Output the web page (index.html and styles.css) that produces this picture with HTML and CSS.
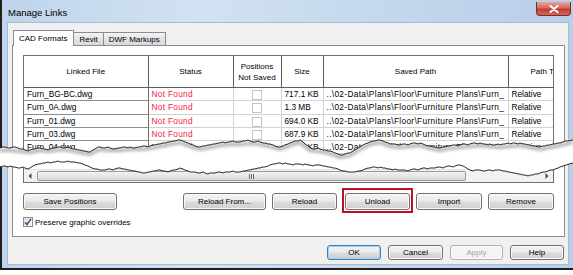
FILE: index.html
```html
<!DOCTYPE html>
<html lang="en">
<head>
    <meta charset="UTF-8">
    <title>Manage Links</title>
    <link rel="stylesheet" href="styles.css">
</head>
<body>
<div class="shot">
    <div class="window">
        <div class="titlebar">
            <span class="title">Manage Links</span>
            <span class="close">
                <svg width="10" height="8" viewBox="0 0 10 8"><path d="M1.5 1 L8.5 7 M8.5 1 L1.5 7" stroke="#fff" stroke-width="2" stroke-linecap="round"/></svg>
            </span>
        </div>
        <div class="client">
            <div class="tabs">
                <span class="tab active">CAD Formats</span>
                <span class="tab">Revit</span>
                <span class="tab">DWF Markups</span>
            </div>
            <div class="panel">
                <div class="grid">
                    <div class="grid-body">
                        <table>
                            <colgroup>
                                <col style="width:124px">
                                <col style="width:85px">
                                <col style="width:48px">
                                <col style="width:42px">
                                <col style="width:185px">
                                <col style="width:46px">
                            </colgroup>
                            <thead>
                                <tr>
                                    <th>Linked File</th>
                                    <th>Status</th>
                                    <th class="two-line">Positions<br>Not Saved</th>
                                    <th>Size</th>
                                    <th>Saved Path</th>
                                    <th class="cut">Path T</th>
                                </tr>
                            </thead>
                            <tbody>
                                <tr>
                                    <td class="name">Furn_BG-BC.dwg</td>
                                    <td class="bad">Not Found</td>
                                    <td class="box"><span class="cb"></span></td>
                                    <td>717.1 KB</td>
                                    <td class="path">..\02-Data\Plans\Floor\Furniture Plans\Furn_</td>
                                    <td>Relative</td>
                                </tr>
                                <tr>
                                    <td class="name">Furn_0A.dwg</td>
                                    <td class="bad">Not Found</td>
                                    <td class="box"><span class="cb"></span></td>
                                    <td>1.3 MB</td>
                                    <td class="path">..\02-Data\Plans\Floor\Furniture Plans\Furn_</td>
                                    <td>Relative</td>
                                </tr>
                                <tr>
                                    <td class="name">Furn_01.dwg</td>
                                    <td class="bad">Not Found</td>
                                    <td class="box"><span class="cb"></span></td>
                                    <td>694.0 KB</td>
                                    <td class="path">..\02-Data\Plans\Floor\Furniture Plans\Furn_</td>
                                    <td>Relative</td>
                                </tr>
                                <tr>
                                    <td class="name">Furn_03.dwg</td>
                                    <td class="bad">Not Found</td>
                                    <td class="box"><span class="cb"></span></td>
                                    <td>687.9 KB</td>
                                    <td class="path">..\02-Data\Plans\Floor\Furniture Plans\Furn_</td>
                                    <td>Relative</td>
                                </tr>
                                <tr>
                                    <td class="name">Furn_04.dwg</td>
                                    <td class="bad">Not Found</td>
                                    <td class="box"><span class="cb"></span></td>
                                    <td>681.5 KB</td>
                                    <td class="path">..\02-Data\Plans\Floor\Furniture Plans\Furn_</td>
                                    <td>Relative</td>
                                </tr>
                            </tbody>
                        </table>
                    </div>
                    <div class="hscroll">
                        <span class="arrow">
                            <svg width="4" height="6" viewBox="0 0 4 6"><path d="M3.5 0 L0.5 3 L3.5 6 Z" fill="#4d4d4d"/></svg>
                        </span>
                        <span class="thumb"><span class="grip"></span></span>
                        <span class="track"></span>
                        <span class="arrow">
                            <svg width="4" height="6" viewBox="0 0 4 6"><path d="M0.5 0 L3.5 3 L0.5 6 Z" fill="#4d4d4d"/></svg>
                        </span>
                    </div>
                </div>
                <div class="actions">
                    <span class="btn save">Save Positions</span>
                    <span class="btn-group">
                        <span class="btn w83">Reload From...</span>
                        <span class="btn w65">Reload</span>
                        <span class="btn w65 marked">Unload</span>
                        <span class="btn w66">Import</span>
                        <span class="btn w66">Remove</span>
                    </span>
                </div>
                <div class="option">
                    <span class="checkbox">
                        <svg width="8" height="8" viewBox="0 0 8 8"><path d="M1 4.2 L3 6.5 L7 0.8" fill="none" stroke="#3b4f74" stroke-width="1.4"/></svg>
                    </span>
                    <span>Preserve graphic overrides</span>
                </div>
            </div>
            <div class="footer">
                <span class="btn default w54">OK</span>
                <span class="btn w55">Cancel</span>
                <span class="btn disabled w53">Apply</span>
                <span class="btn w54">Help</span>
            </div>
        </div>
    </div>

    <!-- torn paper cut across the table -->
    <svg class="tear" width="573" height="50" viewBox="0 135 573 50">
        <defs>
            <filter id="soft" x="-5%" y="-50%" width="110%" height="200%">
                <feGaussianBlur stdDeviation="1.4"/>
            </filter>
        </defs>
        <polygon fill="#fff" points="0,148 5,147 10,148 15,147 20,149 25,150 30,150 35,149 40,148 45,149 50,149 55,148 60,147 65,148 70,148 75,149 80,150 85,151 90,152 95,149 100,147 105,148 110,148 115,149 120,148 125,147 130,147 135,148 140,147 145,146 150,146 155,145 160,144 165,143 170,142 175,141 180,140 185,142 190,144 195,146 200,147 205,146 210,145 215,144 220,143 225,143 230,142 235,142 240,142 245,141 250,141 255,142 260,142 265,143 270,144 275,146 280,147 285,145 290,143 295,141 300,140 305,144 310,148 315,149 320,149 325,150 330,151 335,153 340,155 345,154 350,153 355,150 360,147 365,144 370,142 375,141 380,140 385,142 390,144 395,144 400,145 405,144 410,144 415,143 420,143 425,145 430,146 435,147 440,148 445,147 450,146 455,145 460,145 465,144 470,144 475,143 480,143 485,144 490,144 495,145 500,145 505,144 510,144 515,143 520,143 525,144 530,145 535,146 540,147 545,146 550,145 555,144 560,143 565,141 573,140 573,163 566,165 560,167 555,169 550,170 545,172 540,173 535,174 530,175 525,175 520,174 515,173 510,172 505,171 500,170 495,170 490,170 485,171 480,170 475,170 470,170 465,167 460,165 455,166 450,166 445,167 440,167 435,168 430,168 425,168 420,169 415,169 410,170 405,170 400,170 395,169 390,169 385,168 380,167 375,167 370,168 365,169 362,170 358,171 355,172 350,172 345,171 340,170 335,168 330,167 325,166 320,165 315,165 310,165 305,164 300,164 295,164 290,164 285,163 280,163 275,164 270,165 265,167 260,168 255,169 250,170 245,171 240,172 235,172 230,172 225,172 220,172 215,173 210,173 205,173 200,173 195,172 190,172 185,170 180,168 175,170 170,171 165,171 160,170 155,171 150,172 145,173 140,172 135,171 130,170 125,169 120,168 115,169 110,169 105,170 100,170 96,169 92,168 88,166 85,165 80,163 75,162 70,162 65,162 60,162 55,162 50,163 45,163 40,164 35,165 30,168 25,168 20,168 15,167 10,166 5,166 0,167"/>
        <polyline class="shade" filter="url(#soft)" transform="translate(0,2.5)" points="0,148 10,148 20,149 30,150 40,148 50,149 60,147 70,148 80,150 90,152 95,149 100,147 110,148 120,148 130,147 140,147 150,146 160,144 170,142 180,140 190,144 200,147 210,145 220,143 230,142 240,142 250,141 260,142 270,144 280,147 290,143 300,140 305,144 310,148 320,149 330,151 340,155 350,153 360,147 370,142 380,140 390,144 400,145 410,144 420,143 430,146 440,148 450,146 460,145 470,144 480,143 490,144 500,145 510,144 520,143 530,145 540,147 550,145 560,143 573,140"/>
        <polyline class="edge" points="0,148 3,147 5,147 8,148 10,148 13,147 15,147 18,148 20,149 23,149 25,150 28,151 30,150 33,149 35,149 38,148 40,148 43,149 45,149 48,150 50,149 53,148 55,148 58,147 60,147 63,148 65,148 68,147 70,148 73,149 75,149 78,150 80,150 83,151 85,151 88,152 90,152 93,150 95,149 98,147 100,147 103,148 105,148 108,147 110,148 113,149 115,149 118,148 120,148 123,147 125,147 128,148 130,147 133,148 135,148 138,147 140,147 143,146 145,146 148,147 150,146 153,145 155,145 158,144 160,144 163,143 165,143 168,142 170,142 173,141 175,141 178,140 180,140 183,141 185,142 188,143 190,144 193,145 195,146 198,147 200,147 203,146 205,146 208,145 210,145 213,144 215,144 218,143 220,143 223,142 225,143 228,142 230,142 233,141 235,142 238,142 240,142 243,141 245,141 248,140 250,141 253,142 255,142 258,141 260,142 263,143 265,143 268,144 270,144 273,145 275,146 278,147 280,147 283,146 285,145 288,144 290,143 293,142 295,141 298,141 300,140 303,142 305,144 308,146 310,148 313,149 315,149 318,148 320,149 323,150 325,150 328,151 330,151 333,152 335,153 338,154 340,155 343,155 345,154 348,153 350,153 353,151 355,150 358,148 360,147 363,145 365,144 368,143 370,142 373,141 375,141 378,140 380,140 383,141 385,142 388,143 390,144 393,144 395,144 398,145 400,145 403,144 405,144 408,145 410,144 413,143 415,143 418,144 420,143 423,144 425,145 428,146 430,146 433,147 435,147 438,148 440,148 443,147 445,147 448,146 450,146 453,145 455,145 458,146 460,145 463,144 465,144 468,145 470,144 473,143 475,143 478,144 480,143 483,144 485,144 488,145 490,144 493,145 495,145 498,144 500,145 503,144 505,144 508,143 510,144 513,143 515,143 518,144 520,143 523,144 525,144 528,145 530,145 533,146 535,146 538,147 540,147 543,146 545,146 548,145 550,145 553,144 555,144 558,143 560,143 563,142 565,141 568,141 573,140"/>
        <polyline class="edge" points="0,167 3,166 5,166 8,167 10,166 13,167 15,167 18,168 20,168 23,167 25,168 28,169 30,168 33,166 35,165 38,164 40,164 43,163 45,163 48,162 50,163 53,162 55,162 58,161 60,162 63,162 65,162 68,161 70,162 73,162 75,162 78,163 80,163 83,164 85,165 88,166 90,167 92,168 95,169 97,169 100,170 103,170 105,170 108,169 110,169 113,170 115,169 118,168 120,168 123,169 125,169 128,170 130,170 133,171 135,171 138,172 140,172 143,173 145,173 148,172 150,172 153,171 155,171 158,170 160,170 163,171 165,171 168,172 170,171 173,170 175,170 178,169 180,168 183,169 185,170 188,171 190,172 193,172 195,172 198,173 200,173 203,172 205,173 208,174 210,173 213,173 215,173 218,172 220,172 223,173 225,172 228,172 230,172 233,171 235,172 238,172 240,172 243,171 245,171 248,170 250,170 253,169 255,169 258,168 260,168 263,167 265,167 268,166 270,165 273,164 275,164 278,163 280,163 283,164 285,163 288,164 290,164 293,165 295,164 298,164 300,164 303,165 305,164 308,165 310,165 313,166 315,165 318,165 320,165 323,166 325,166 328,167 330,167 333,168 335,168 338,169 340,170 343,171 345,171 348,172 350,172 353,172 355,172 358,171 360,171 363,170 365,169 368,168 370,168 373,167 375,167 378,168 380,167 383,168 385,168 388,169 390,169 393,170 395,169 398,170 400,170 403,170 405,170 408,171 410,170 413,169 415,169 418,170 420,169 423,168 425,168 428,169 430,168 433,168 435,168 438,167 440,167 443,168 445,167 448,166 450,166 453,167 455,166 458,165 460,165 463,166 465,167 468,169 470,170 473,171 475,170 478,170 480,170 483,171 485,171 488,170 490,170 493,171 495,170 498,170 500,170 503,171 505,171 508,172 510,172 513,173 515,173 518,174 520,174 523,175 525,175 528,176 530,175 533,175 535,174 538,174 540,173 543,172 545,172 548,171 550,170 553,170 555,169 558,168 560,167 563,166 566,165 569,164 573,163"/>
    </svg>
</div>
</body>
</html>
```

FILE: styles.css
```css
body {
    margin: 0;
    background: #fff;
    font-family: "Liberation Sans", Arial, sans-serif;
    font-size: 8px;
    color: #000;
}
.shot {
    position: relative;
    width: 573px;
    height: 275px;
    overflow: hidden;
}
.window {
    width: 573px;
    height: 270px;
    box-sizing: border-box;
    border-left: 2px solid #1f1f1f;
    border-bottom: 2px solid #1f1f1f;
    padding: 0 5px 4px 6px;
    display: flex;
    flex-direction: column;
    background: linear-gradient(to right, #bed4ec, #d3e2f2 35%, #c6d9ee 60%, #b8cfe9);
}
.titlebar {
    height: 23px;
    display: flex;
    justify-content: space-between;
    align-items: flex-start;
}
.title {
    font-size: 9.5px;
    margin-top: 7px;
    color: #000;
}
.close {
    width: 35px;
    height: 14px;
    margin-top: 2px;
    margin-right: -3px;
    box-sizing: border-box;
    border: 1px solid #7a2c2c;
    border-top: none;
    border-radius: 0 0 4px 4px;
    background: linear-gradient(#e9a493, #d4695e 45%, #c23b33 55%, #d2685b);
    display: flex;
    align-items: center;
    justify-content: center;
}
.client {
    flex: 1;
    background: #f0f0f0;
    padding: 7px 3px 4px 4px;
    display: flex;
    flex-direction: column;
    box-shadow: 0 0 0 1px #a7bad0;
}
/* tabs */
.tabs {
    height: 15px;
    display: flex;
    align-items: flex-end;
    padding-left: 1px;
}
.tab {
    height: 13px;
    box-sizing: border-box;
    border: 1px solid #898c95;
    border-bottom: none;
    margin-left: -1px;
    padding: 0 5px;
    display: flex;
    align-items: center;
    background: linear-gradient(#f3f3f3, #e3e3e3 50%, #dadada);
}
.tab.active {
    height: 16px;
    margin-bottom: -1px;
    margin-left: 0;
    background: #fff;
    position: relative;
    z-index: 1;
    padding: 0 6px 1px 5px;
}
.panel {
    height: 192px;
    box-sizing: border-box;
    border: 1px solid #898c95;
    background: #fff;
    padding: 9px 10px 0 10px;
}
/* links grid */
.grid {
    height: 128px;
    box-sizing: border-box;
    border: 1px solid #6f6f6f;
    display: flex;
    flex-direction: column;
}
.grid-body {
    flex: 1;
    overflow: hidden;
}
table {
    border-collapse: collapse;
    table-layout: fixed;
    width: 530px;
}
th {
    height: 31px;
    font-weight: normal;
    text-align: center;
    border-right: 1px solid #5c5c5c;
    border-bottom: 1px solid #5c5c5c;
    padding: 0;
    white-space: nowrap;
    overflow: hidden;
}
th.two-line {
    line-height: 11px;
}
th.cut {
    text-align: left;
    padding-left: 22px;
    border-right: none;
}
td {
    height: 12.3px;
    padding: 0 0 0 3px;
    border-right: 1px solid #d2d2d2;
    border-bottom: 1px solid #d2d2d2;
    white-space: nowrap;
    overflow: hidden;
    line-height: 12px;
    font-size: 8.3px;
}
td:last-child {
    border-right: none;
}
td.name {
    border-right-color: #6c6c6c;
    border-bottom-color: #8c8c8c;
}
td.bad {
    color: #f6203f;
    letter-spacing: 0.3px;
}
td.path {
    letter-spacing: 0.33px;
}
td.box {
    padding: 0;
    text-align: center;
}
.cb {
    display: inline-block;
    width: 8px;
    height: 8px;
    border: 1px solid #c4c4c4;
    vertical-align: middle;
}
.hscroll {
    height: 12px;
    display: flex;
    background: #f2f2f2;
    border-top: 1px solid #e2e2e2;
}
.arrow {
    width: 12px;
    display: flex;
    align-items: center;
    justify-content: center;
}
.thumb {
    width: 429px;
    margin: 1px 0 1px 1px;
    box-sizing: border-box;
    border: 1px solid #9c9c9c;
    border-radius: 2px;
    background: linear-gradient(#f2f2f2, #e6e6e6 50%, #d6d6d6);
    display: flex;
    align-items: center;
    justify-content: center;
}
.grip {
    width: 6px;
    height: 5px;
    background: repeating-linear-gradient(to right, #6a6a6a 0 1px, transparent 1px 2px);
}
.track {
    flex: 1;
}
/* buttons */
.btn {
    height: 17px;
    box-sizing: border-box;
    border: 1px solid #707070;
    border-radius: 3px;
    background: linear-gradient(#f2f2f2, #ebebeb 48%, #dddddd 52%, #cfcfcf);
    box-shadow: inset 0 0 0 1px #fafafa;
    display: flex;
    align-items: center;
    justify-content: center;
    white-space: nowrap;
}
.actions {
    margin-top: 10px;
    display: flex;
}
.save {
    width: 94px;
}
.btn-group {
    margin-left: auto;
    display: flex;
    gap: 6px;
}
.w83 { width: 83px; }
.w65 { width: 65px; }
.w66 { width: 66px; }
.w53 { width: 53px; }
.w54 { width: 54px; }
.w55 { width: 55px; }
.marked {
    position: relative;
    margin-left: 2px;
}
.marked::after {
    content: "";
    position: absolute;
    top: -6px;
    bottom: -4px;
    left: -4px;
    right: -4px;
    border: 2.5px solid #c1121b;
}
.option {
    margin-top: 7px;
    display: flex;
    align-items: center;
    gap: 2px;
    height: 10px;
}
.checkbox {
    width: 10px;
    height: 10px;
    box-sizing: border-box;
    border: 1px solid #8e8f8f;
    background: linear-gradient(135deg, #dcdcdc, #fbfbfb);
    display: flex;
    align-items: center;
    justify-content: center;
}
.footer {
    margin-top: 8px;
    display: flex;
    justify-content: flex-end;
    gap: 7px;
    padding-right: 1px;
}
.footer .btn {
    height: 15px;
}
.btn.default {
    border-color: #3c7fb1;
    box-shadow: inset 0 0 0 1px #9fd5f4;
}
.btn.disabled {
    border-color: #adb2b5;
    background: #f4f4f4;
    color: #a3a3a3;
}
/* tear overlay */
.tear {
    position: absolute;
    left: 0;
    top: 135px;
}
.tear .edge {
    fill: none;
    stroke: #2b2b2b;
    stroke-width: 1;
}
.tear .shade {
    fill: none;
    stroke: #8a8a8a;
    stroke-width: 3;
    opacity: 0.7;
}
```
